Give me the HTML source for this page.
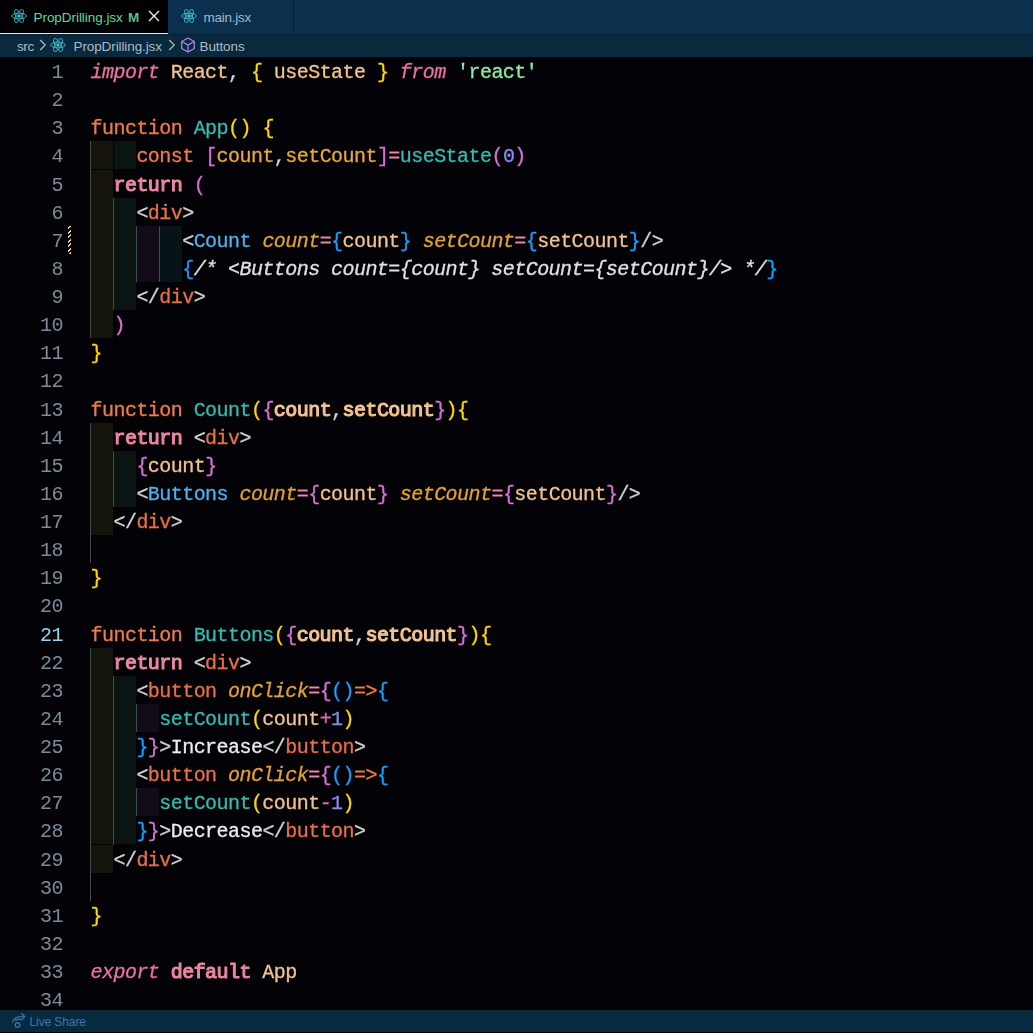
<!DOCTYPE html>
<html><head><meta charset="utf-8">
<style>
*{margin:0;padding:0;box-sizing:border-box}
html,body{width:1033px;height:1033px;overflow:hidden;background:#030307}
body{position:relative;font-family:"Liberation Sans",sans-serif}
#tabs{position:absolute;left:0;top:0;width:1033px;height:34px;background:#0b304e}
#t1{position:absolute;left:0;top:0;width:168px;height:34px;background:#010103;border-bottom:1px solid #e8e8e8}
#t2{position:absolute;left:168px;top:0;width:126px;height:33px;border-right:1px solid #041a2c}
.tx{position:absolute;white-space:pre}
#crumbs{position:absolute;left:0;top:34px;width:1033px;height:23px;background:linear-gradient(#0a283c,#0a2a3c);border-top:1px solid #06213a;font-size:14px;color:#a9bcc8}
#crumbs span,#crumbs svg{position:absolute}
#editor{will-change:transform;position:absolute;left:0;top:57px;width:1033px;height:953px;background:#030307;overflow:hidden}
.ln{position:absolute;left:90.60px;height:28.125px;line-height:28.125px;white-space:pre;font-family:"Liberation Mono",monospace;font-size:20px;letter-spacing:-0.5519531250000007px;color:#d8d8d8;-webkit-text-stroke:0.3px currentColor}
.nm{position:absolute;left:0;width:63px;text-align:right;height:28.125px;line-height:28.125px;font-family:"Liberation Mono",monospace;font-size:20px;letter-spacing:-0.5519531250000007px;color:#7c8b98}
.nm.act{color:#9fd2f0}
.rb{position:absolute;width:22.90px;height:28.12px}
.gd{position:absolute;width:1px;background:#3e4c4f}
#dirty{position:absolute;left:68px;top:168.75px;width:3px;height:28.12px;background:repeating-linear-gradient(-45deg,#e8d2a6 0 1.6px,transparent 1.6px 3.2px)}
#status{position:absolute;left:0;top:1010px;width:1033px;height:22px;background:#082a3e;border-top:1px solid #12232f;font-size:13px;color:#3d8fd0}
.kwi{color:#ea72a0;font-style:italic}
.st{color:#f27a4c}
.ret{color:#ea86a0;-webkit-text-stroke:1.1px #ea86a0}
.var{color:#f2c290}
.var2{color:#e8a838}
.com{color:#c0d8e4}
.fn{color:#38b8b0}
.comp{color:#4fb0ee}
.tag{color:#ea6e48}
.pun{color:#d0d0d0}
.attr{color:#e2a232;font-style:italic}
.eq{color:#f088ae}
.str{color:#8ee6a4}
.num{color:#8a8af2}
.b1{color:#ffd700}
.b2{color:#da70d6}
.b3{color:#179fff}
.cmt{color:#e0e0e0;font-style:italic}
.txt{color:#ececec}
.op{color:#f27a44}
.opp{color:#ea68a0}
.pb{color:#f2c290;-webkit-text-stroke:1.1px #f2c290}
</style></head><body>
<div id="tabs">
 <div id="t1"></div><div id="t2"></div>
 <span style="position:absolute;left:10.9px;top:7.9px;width:16px;height:16px;line-height:0"><svg style="display:block" width="16" height="16" viewBox="-12 -12 24 24"><g fill="none" stroke="#45c3d8" stroke-width="1.25"><ellipse rx="11" ry="4.3"/><ellipse rx="11" ry="4.3" transform="rotate(60)"/><ellipse rx="11" ry="4.3" transform="rotate(120)"/></g><circle r="2.5" fill="#4cc8dc"/></svg></span><div class="tx" style="left:33.5px;top:9.78px;font-size:13.5px;line-height:15.08px;color:#66d69c;letter-spacing:-0.05px;font-weight:normal">PropDrilling.jsx</div><div class="tx" style="left:128px;top:9.78px;font-size:13.5px;line-height:15.08px;color:#5bbd88;letter-spacing:0px;font-weight:bold">M</div>
 <svg style="position:absolute;left:148px;top:10px" width="12" height="12" viewBox="0 0 12 12"><path d="M1 1 L11 11 M11 1 L1 11" stroke="#f2f2f2" stroke-width="1.3"/></svg>
 <span style="position:absolute;left:180.9px;top:7.8px;width:16px;height:16px;line-height:0"><svg style="display:block" width="16" height="16" viewBox="-12 -12 24 24"><g fill="none" stroke="#45c3d8" stroke-width="1.25"><ellipse rx="11" ry="4.3"/><ellipse rx="11" ry="4.3" transform="rotate(60)"/><ellipse rx="11" ry="4.3" transform="rotate(120)"/></g><circle r="2.5" fill="#4cc8dc"/></svg></span><div class="tx" style="left:203.5px;top:9.78px;font-size:13.5px;line-height:15.08px;color:#a3b9c9;letter-spacing:-0.25px;font-weight:normal">main.jsx</div>
</div>
<div id="crumbs"></div>
<div>
 <div class="tx" style="left:17px;top:38.78px;font-size:13.5px;line-height:15.08px;color:#a9bcc8;letter-spacing:-0.4px;font-weight:normal">src</div>
 <svg style="position:absolute;left:39px;top:39px" width="8" height="12" viewBox="0 0 8 12"><path d="M1.2 1 L6.2 6 L1.2 11" fill="none" stroke="#a9bcc8" stroke-width="1.2"/></svg>
 <span style="position:absolute;left:50.35px;top:37.35px;width:16px;height:16px;line-height:0"><svg style="display:block" width="16" height="16" viewBox="-12 -12 24 24"><g fill="none" stroke="#45c3d8" stroke-width="1.25"><ellipse rx="11" ry="4.3"/><ellipse rx="11" ry="4.3" transform="rotate(60)"/><ellipse rx="11" ry="4.3" transform="rotate(120)"/></g><circle r="2.5" fill="#4cc8dc"/></svg></span><div class="tx" style="left:73.5px;top:38.78px;font-size:13.5px;line-height:15.08px;color:#a9bcc8;letter-spacing:-0.1px;font-weight:normal">PropDrilling.jsx</div>
 <svg style="position:absolute;left:167.5px;top:39px" width="8" height="12" viewBox="0 0 8 12"><path d="M1.2 1 L6.2 6 L1.2 11" fill="none" stroke="#a9bcc8" stroke-width="1.2"/></svg>
 <span style="position:absolute;left:180px;top:36.5px;line-height:0"><svg style="display:block" width="16" height="16" viewBox="0 0 16 16"><g fill="none" stroke="#b48ae8" stroke-width="1.2" stroke-linejoin="round"><path d="M8 1 L14.3 4.5 L14.3 11.5 L8 15 L1.7 11.5 L1.7 4.5 Z"/><path d="M1.7 4.5 L8 8 L14.3 4.5 M8 8 L8 15"/></g></svg></span><div class="tx" style="left:199.5px;top:38.78px;font-size:13.5px;line-height:15.08px;color:#a9bcc8;letter-spacing:-0.1px;font-weight:normal">Buttons</div>
</div>
<div id="editor">
<div class="rb" style="top:84.38px;left:90.60px;background:rgba(255,255,64,0.07)"></div><div class="rb" style="top:84.38px;left:113.50px;background:rgba(120,255,180,0.07)"></div><div class="rb" style="top:112.50px;left:90.60px;background:rgba(255,255,64,0.07)"></div><div class="rb" style="top:140.62px;left:90.60px;background:rgba(255,255,64,0.07)"></div><div class="rb" style="top:140.62px;left:113.50px;background:rgba(120,255,180,0.07)"></div><div class="rb" style="top:168.75px;left:90.60px;background:rgba(255,255,64,0.07)"></div><div class="rb" style="top:168.75px;left:113.50px;background:rgba(120,255,180,0.07)"></div><div class="rb" style="top:168.75px;left:136.40px;background:rgba(255,127,255,0.07)"></div><div class="rb" style="top:168.75px;left:159.30px;background:rgba(79,236,236,0.07)"></div><div class="rb" style="top:196.88px;left:90.60px;background:rgba(255,255,64,0.07)"></div><div class="rb" style="top:196.88px;left:113.50px;background:rgba(120,255,180,0.07)"></div><div class="rb" style="top:196.88px;left:136.40px;background:rgba(255,127,255,0.07)"></div><div class="rb" style="top:196.88px;left:159.30px;background:rgba(79,236,236,0.07)"></div><div class="rb" style="top:225.00px;left:90.60px;background:rgba(255,255,64,0.07)"></div><div class="rb" style="top:225.00px;left:113.50px;background:rgba(120,255,180,0.07)"></div><div class="rb" style="top:253.12px;left:90.60px;background:rgba(255,255,64,0.07)"></div><div class="rb" style="top:365.62px;left:90.60px;background:rgba(255,255,64,0.07)"></div><div class="rb" style="top:393.75px;left:90.60px;background:rgba(255,255,64,0.07)"></div><div class="rb" style="top:393.75px;left:113.50px;background:rgba(120,255,180,0.07)"></div><div class="rb" style="top:421.88px;left:90.60px;background:rgba(255,255,64,0.07)"></div><div class="rb" style="top:421.88px;left:113.50px;background:rgba(120,255,180,0.07)"></div><div class="rb" style="top:450.00px;left:90.60px;background:rgba(255,255,64,0.07)"></div><div class="rb" style="top:590.62px;left:90.60px;background:rgba(255,255,64,0.07)"></div><div class="rb" style="top:618.75px;left:90.60px;background:rgba(255,255,64,0.07)"></div><div class="rb" style="top:618.75px;left:113.50px;background:rgba(120,255,180,0.07)"></div><div class="rb" style="top:646.88px;left:90.60px;background:rgba(255,255,64,0.07)"></div><div class="rb" style="top:646.88px;left:113.50px;background:rgba(120,255,180,0.07)"></div><div class="rb" style="top:646.88px;left:136.40px;background:rgba(255,127,255,0.07)"></div><div class="rb" style="top:675.00px;left:90.60px;background:rgba(255,255,64,0.07)"></div><div class="rb" style="top:675.00px;left:113.50px;background:rgba(120,255,180,0.07)"></div><div class="rb" style="top:703.12px;left:90.60px;background:rgba(255,255,64,0.07)"></div><div class="rb" style="top:703.12px;left:113.50px;background:rgba(120,255,180,0.07)"></div><div class="rb" style="top:731.25px;left:90.60px;background:rgba(255,255,64,0.07)"></div><div class="rb" style="top:731.25px;left:113.50px;background:rgba(120,255,180,0.07)"></div><div class="rb" style="top:731.25px;left:136.40px;background:rgba(255,127,255,0.07)"></div><div class="rb" style="top:759.38px;left:90.60px;background:rgba(255,255,64,0.07)"></div><div class="rb" style="top:759.38px;left:113.50px;background:rgba(120,255,180,0.07)"></div><div class="rb" style="top:787.50px;left:90.60px;background:rgba(255,255,64,0.07)"></div>
<div class="gd" style="top:84.38px;height:196.88px;left:90.10px"></div><div class="gd" style="top:140.62px;height:112.50px;left:113.00px"></div><div class="gd" style="top:168.75px;height:56.25px;left:135.90px"></div><div class="gd" style="top:168.75px;height:56.25px;left:158.80px"></div><div class="gd" style="top:365.62px;height:140.62px;left:90.10px"></div><div class="gd" style="top:393.75px;height:56.25px;left:113.00px"></div><div class="gd" style="top:590.62px;height:253.12px;left:90.10px"></div><div class="gd" style="top:618.75px;height:168.75px;left:113.00px"></div><div class="gd" style="top:646.88px;height:28.12px;left:135.90px"></div><div class="gd" style="top:731.25px;height:28.12px;left:135.90px"></div>
<div id="dirty"></div>
<div class="nm" style="top:2.00px">1</div><div class="nm" style="top:30.12px">2</div><div class="nm" style="top:58.25px">3</div><div class="nm" style="top:86.38px">4</div><div class="nm" style="top:114.50px">5</div><div class="nm" style="top:142.62px">6</div><div class="nm" style="top:170.75px">7</div><div class="nm" style="top:198.88px">8</div><div class="nm" style="top:227.00px">9</div><div class="nm" style="top:255.12px">10</div><div class="nm" style="top:283.25px">11</div><div class="nm" style="top:311.38px">12</div><div class="nm" style="top:339.50px">13</div><div class="nm" style="top:367.62px">14</div><div class="nm" style="top:395.75px">15</div><div class="nm" style="top:423.88px">16</div><div class="nm" style="top:452.00px">17</div><div class="nm" style="top:480.12px">18</div><div class="nm" style="top:508.25px">19</div><div class="nm" style="top:536.38px">20</div><div class="nm act" style="top:564.50px">21</div><div class="nm" style="top:592.62px">22</div><div class="nm" style="top:620.75px">23</div><div class="nm" style="top:648.88px">24</div><div class="nm" style="top:677.00px">25</div><div class="nm" style="top:705.12px">26</div><div class="nm" style="top:733.25px">27</div><div class="nm" style="top:761.38px">28</div><div class="nm" style="top:789.50px">29</div><div class="nm" style="top:817.62px">30</div><div class="nm" style="top:845.75px">31</div><div class="nm" style="top:873.88px">32</div><div class="nm" style="top:902.00px">33</div><div class="nm" style="top:930.12px">34</div>
<div class="ln" style="top:2.00px"><span class="kwi">import</span> <span class="var">React</span><span class="com">,</span> <span class="b1">{</span> <span class="var">useState</span> <span class="b1">}</span> <span class="kwi">from</span> <span class="str">&#x27;react&#x27;</span></div><div class="ln" style="top:30.12px"></div><div class="ln" style="top:58.25px"><span class="st">function</span> <span class="fn">App</span><span class="b1">()</span> <span class="b1">{</span></div><div class="ln" style="top:86.38px">    <span class="st">const</span> <span class="b2">[</span><span class="var2">count</span><span class="com">,</span><span class="var2">setCount</span><span class="b2">]</span><span class="eq">=</span><span class="fn">useState</span><span class="b2">(</span><span class="num">0</span><span class="b2">)</span></div><div class="ln" style="top:114.50px">  <span class="ret">return</span> <span class="b2">(</span></div><div class="ln" style="top:142.62px">    <span class="pun">&lt;</span><span class="tag">div</span><span class="pun">&gt;</span></div><div class="ln" style="top:170.75px">        <span class="pun">&lt;</span><span class="comp">Count</span> <span class="attr">count</span><span class="eq">=</span><span class="b3">{</span><span class="var">count</span><span class="b3">}</span> <span class="attr">setCount</span><span class="eq">=</span><span class="b3">{</span><span class="var">setCount</span><span class="b3">}</span><span class="pun">/&gt;</span></div><div class="ln" style="top:198.88px">        <span class="b3">{</span><span class="cmt">/* &lt;Buttons count={count} setCount={setCount}/&gt; */</span><span class="b3">}</span></div><div class="ln" style="top:227.00px">    <span class="pun">&lt;/</span><span class="tag">div</span><span class="pun">&gt;</span></div><div class="ln" style="top:255.12px">  <span class="b2">)</span></div><div class="ln" style="top:283.25px"><span class="b1">}</span></div><div class="ln" style="top:311.38px"></div><div class="ln" style="top:339.50px"><span class="st">function</span> <span class="fn">Count</span><span class="b1">(</span><span class="b2">{</span><span class="pb">count</span><span class="com">,</span><span class="pb">setCount</span><span class="b2">}</span><span class="b1">)</span><span class="b1">{</span></div><div class="ln" style="top:367.62px">  <span class="ret">return</span> <span class="pun">&lt;</span><span class="tag">div</span><span class="pun">&gt;</span></div><div class="ln" style="top:395.75px">    <span class="b2">{</span><span class="var">count</span><span class="b2">}</span></div><div class="ln" style="top:423.88px">    <span class="pun">&lt;</span><span class="comp">Buttons</span> <span class="attr">count</span><span class="eq">=</span><span class="b2">{</span><span class="var">count</span><span class="b2">}</span> <span class="attr">setCount</span><span class="eq">=</span><span class="b2">{</span><span class="var">setCount</span><span class="b2">}</span><span class="pun">/&gt;</span></div><div class="ln" style="top:452.00px">  <span class="pun">&lt;/</span><span class="tag">div</span><span class="pun">&gt;</span></div><div class="ln" style="top:480.12px"></div><div class="ln" style="top:508.25px"><span class="b1">}</span></div><div class="ln" style="top:536.38px"></div><div class="ln" style="top:564.50px"><span class="st">function</span> <span class="fn">Buttons</span><span class="b1">(</span><span class="b2">{</span><span class="pb">count</span><span class="com">,</span><span class="pb">setCount</span><span class="b2">}</span><span class="b1">)</span><span class="b1">{</span></div><div class="ln" style="top:592.62px">  <span class="ret">return</span> <span class="pun">&lt;</span><span class="tag">div</span><span class="pun">&gt;</span></div><div class="ln" style="top:620.75px">    <span class="pun">&lt;</span><span class="tag">button</span> <span class="attr">onClick</span><span class="eq">=</span><span class="b2">{</span><span class="b3">()</span><span class="op">=&gt;</span><span class="b3">{</span></div><div class="ln" style="top:648.88px">      <span class="fn">setCount</span><span class="b1">(</span><span class="var">count</span><span class="opp">+</span><span class="num">1</span><span class="b1">)</span></div><div class="ln" style="top:677.00px">    <span class="b3">}</span><span class="b2">}</span><span class="pun">&gt;</span><span class="txt">Increase</span><span class="pun">&lt;/</span><span class="tag">button</span><span class="pun">&gt;</span></div><div class="ln" style="top:705.12px">    <span class="pun">&lt;</span><span class="tag">button</span> <span class="attr">onClick</span><span class="eq">=</span><span class="b2">{</span><span class="b3">()</span><span class="op">=&gt;</span><span class="b3">{</span></div><div class="ln" style="top:733.25px">      <span class="fn">setCount</span><span class="b1">(</span><span class="var">count</span><span class="opp">-</span><span class="num">1</span><span class="b1">)</span></div><div class="ln" style="top:761.38px">    <span class="b3">}</span><span class="b2">}</span><span class="pun">&gt;</span><span class="txt">Decrease</span><span class="pun">&lt;/</span><span class="tag">button</span><span class="pun">&gt;</span></div><div class="ln" style="top:789.50px">  <span class="pun">&lt;/</span><span class="tag">div</span><span class="pun">&gt;</span></div><div class="ln" style="top:817.62px"></div><div class="ln" style="top:845.75px"><span class="b1">}</span></div><div class="ln" style="top:873.88px"></div><div class="ln" style="top:902.00px"><span class="kwi">export</span> <span class="ret">default</span> <span class="var">App</span></div><div class="ln" style="top:930.12px"></div>
</div>
<div id="status"><span style="position:absolute;left:8px;top:-1px;line-height:0"><svg style="display:block" width="24" height="20" viewBox="0 0 24 20"><g fill="none" stroke="#3672aa" stroke-width="1.4" stroke-linecap="round" stroke-linejoin="round"><circle cx="9.5" cy="15" r="2.3"/><path d="M4.5 12 C6 8.5 9 6.6 13 6.6 L15.5 6.6"/><path d="M13.8 3.8 L16.8 6.8 L13.8 9.8"/><path d="M7.6 10.3 C9 9.2 10.8 8.9 13.5 9.4"/></g></svg></span><div class="tx" style="left:29.5px;top:5.14px;font-size:12px;line-height:13.40px;color:#3a78b0;letter-spacing:-0.1px;font-weight:normal">Live Share</div></div>
</body></html>
